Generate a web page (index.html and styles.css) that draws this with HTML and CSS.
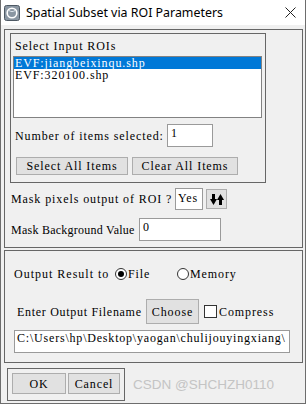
FILE: index.html
```html
<!DOCTYPE html>
<html lang="en">
  <head>
    <meta charset="UTF-8" />
    <title>Spatial Subset via ROI Parameters</title>
    <link rel="stylesheet" href="styles.css">
  </head>
  <body>
    <div class="window">
      <div class="titlebar">
        <svg class="app-icon" width="16" height="16" viewBox="0 0 16 16">
          <rect x="0.5" y="0.5" width="15" height="15" rx="2" fill="#8a96a2" stroke="#4e5964" />
          <circle cx="8" cy="8" r="4.8" fill="none" stroke="#fff" stroke-width="1.6" />
          <path d="M5 5.5 C7 7 9 7 11 5.5" fill="none" stroke="#dfe6ec" stroke-width="1" />
        </svg>
        <span class="title">Spatial Subset via ROI Parameters</span>
        <svg class="close" width="11" height="11" viewBox="0 0 11 11">
          <path d="M0.5 0.5 L10.5 10.5 M10.5 0.5 L0.5 10.5" stroke="#222" stroke-width="1" />
        </svg>
      </div>

      <div class="client">
        <div class="panel panel-main">
          <div class="roi-frame">
            <div class="frame-label">Select Input ROIs</div>
            <div class="listbox">
              <div class="item selected">EVF:jiangbeixinqu.shp</div>
              <div class="item">EVF:320100.shp</div>
            </div>
            <div class="row count-row">
              <span class="count-label">Number of items selected:</span>
              <span class="field count-field">1</span>
            </div>
            <div class="row btn-row">
              <span class="btn btn-select">Select All Items</span>
              <span class="btn btn-clear">Clear All Items</span>
            </div>
          </div>

          <div class="row mask-row">
            <span class="mask-label">Mask pixels output of ROI ?</span>
            <span class="field yes-field">Yes</span>
            <span class="btn toggle">
              <svg width="14" height="11" viewBox="0 0 14 11">
                <rect x="2" y="0" width="3" height="6" fill="#000" />
                <polygon points="0,5 7,5 3.5,11" fill="#000" />
                <rect x="9" y="5" width="3" height="6" fill="#000" />
                <polygon points="7,6 14,6 10.5,0" fill="#000" />
              </svg>
            </span>
          </div>

          <div class="row bg-row">
            <span class="bg-label">Mask Background Value</span>
            <span class="field bg-field">0</span>
          </div>
        </div>

        <div class="panel panel-output">
          <div class="row output-row">
            <span class="output-label">Output Result to</span>
            <span class="radio on"></span>
            <span class="opt-label file-label">File</span>
            <span class="radio memory"></span>
            <span class="opt-label">Memory</span>
          </div>
          <div class="row file-row">
            <span class="file-name-label">Enter Output Filename</span>
            <span class="btn btn-choose">Choose</span>
            <span class="checkbox"></span>
            <span class="check-label">Compress</span>
          </div>
          <div class="field path-field">C:\Users\hp\Desktop\yaogan\chulijouyingxiang\</div>
        </div>

        <div class="bottom">
          <div class="action-box">
            <span class="btn btn-ok">OK</span>
            <span class="btn btn-cancel">Cancel</span>
          </div>
          <span class="watermark">CSDN @SHCHZH0110</span>
        </div>
      </div>
    </div>
  </body>
</html>
```

FILE: styles.css
```css
* {
  box-sizing: border-box;
}
body {
  margin: 0;
  width: 307px;
  height: 404px;
  overflow: hidden;
  background: #fff;
}
.window {
  width: 306px;
  height: 404px;
  border: 1px solid #6d6d6d;
  border-top: none;
  background: #f0f0f0;
  font-family: "Liberation Serif", serif;
  font-size: 12px;
  letter-spacing: 0.9px;
  line-height: 12px;
  color: #000;
  white-space: nowrap;
}
.titlebar {
  height: 25px;
  background: #fff;
  display: flex;
  align-items: center;
  font-family: "Noto Sans", sans-serif;
  letter-spacing: 0;
}
.app-icon {
  margin-left: 3px;
}
.title {
  margin-left: 6px;
  font-size: 12.4px;
  color: #000;
}
.close {
  margin-left: auto;
  margin-right: 9px;
}
.client {
  padding: 4px 0 0 3px;
}
.panel {
  width: 299px;
  border: 1px solid #666;
}
.panel-main {
  height: 219px;
}
.panel-output {
  height: 113px;
  margin-top: 2px;
}
.roi-frame {
  margin: 3px 0 0 5px;
  width: 256px;
  height: 150px;
  border: 1px solid #666;
}
.frame-label {
  height: 18px;
  padding: 6px 0 0 4px;
}
.listbox {
  margin: 4px 0 0 2px;
  width: 249px;
  height: 62px;
  border: 1px solid #828282;
  background: #fff;
}
.item {
  height: 12px;
  padding-left: 1px;
}
.item.selected {
  background: #0078d7;
  color: #fff;
}
.row {
  display: flex;
  align-items: center;
}
.field {
  background: #fff;
  border: 1px solid #9a9a9a;
  padding: 2px 3px;
}
.btn {
  display: flex;
  align-items: center;
  justify-content: center;
  background: #e1e1e1;
  border: 1px solid #adadad;
}
.count-row {
  margin: 6px 0 0 4px;
}
.count-label {
  width: 150px;
}
.count-field {
  width: 46px;
  height: 23px;
  margin-left: 2px;
}
.btn-row {
  gap: 4px;
  margin: 10px 0 0 5px;
}
.btn-select {
  width: 112px;
  height: 18px;
}
.btn-clear {
  width: 106px;
  height: 18px;
}
.mask-row {
  margin: 5px 0 0 6px;
}
.mask-label {
  width: 162px;
}
.yes-field {
  width: 28px;
  height: 22px;
  margin-left: 2px;
  padding: 3px 0 0 2px;
}
.toggle {
  width: 21px;
  height: 20px;
  margin-left: 3px;
}
.bg-row {
  margin: 8px 0 0 6px;
}
.bg-label {
  width: 126px;
  letter-spacing: 0.25px;
}
.bg-field {
  width: 82px;
  height: 23px;
  margin-left: 2px;
}
.output-row {
  height: 14px;
  margin: 16px 0 0 9px;
}
.output-label {
  width: 96px;
  letter-spacing: 1px;
}
.radio {
  position: relative;
  width: 12px;
  height: 12px;
  border: 1px solid #333;
  border-radius: 50%;
  background: #fff;
  margin-left: 5px;
}
.radio.on::after {
  content: "";
  position: absolute;
  left: 2px;
  top: 2px;
  width: 6px;
  height: 6px;
  border-radius: 50%;
  background: #000;
}
.radio.memory {
  margin-left: 25px;
}
.opt-label {
  margin-left: 1px;
}
.file-label {
  width: 24px;
}
.file-row {
  margin: 18px 0 0 12px;
}
.file-name-label {
  width: 126px;
  letter-spacing: 0.7px;
}
.btn-choose {
  width: 53px;
  height: 25px;
  margin-left: 3px;
}
.checkbox {
  width: 13px;
  height: 13px;
  border: 1px solid #333;
  background: #fff;
  margin-left: 5px;
}
.check-label {
  margin-left: 2px;
}
.path-field {
  margin: 6px 0 0 9px;
  width: 276px;
  height: 23px;
  padding: 1px 2px;
  letter-spacing: 0.8px;
}
.bottom {
  display: flex;
  align-items: center;
  margin: 5px 0 0 3px;
}
.action-box {
  display: flex;
  gap: 2px;
  width: 118px;
  height: 33px;
  padding: 4px 0 0 4px;
  border: 1px solid #666;
}
.btn-ok {
  width: 54px;
  height: 21px;
}
.btn-cancel {
  width: 52px;
  height: 21px;
}
.watermark {
  margin-left: 8px;
  font-family: "Liberation Sans", Arial, sans-serif;
  font-size: 13.5px;
  letter-spacing: 0;
  color: #c4c4c4;
}
```
